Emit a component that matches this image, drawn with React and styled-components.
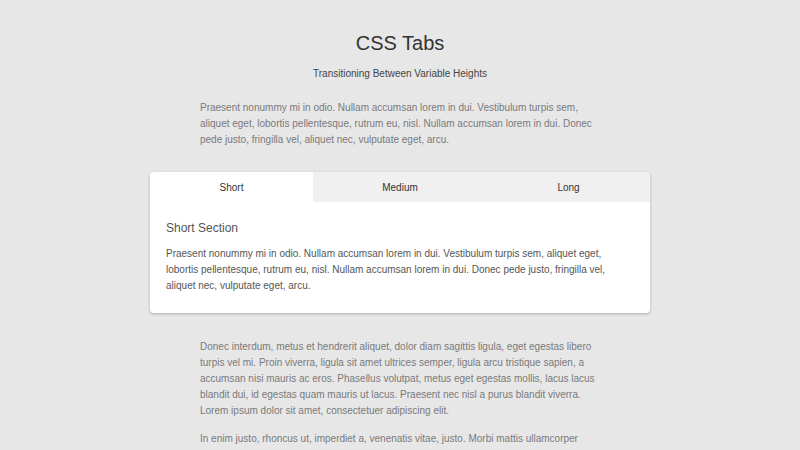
import React, { useState } from 'react'
import styled, { createGlobalStyle } from 'styled-components'

const GlobalStyle = createGlobalStyle`
  body {
    margin: 0;
    background: #e7e7e7;
    font-family: "Liberation Sans", Arial, sans-serif;
  }
`

const Page = styled.div`
  padding-top: 31px;
  display: flex;
  flex-direction: column;
  align-items: center;
`

const Title = styled.h1`
  margin: 0;
  font-size: 20px;
  font-weight: 400;
  color: #333;
  line-height: 24px;
`

const Subtitle = styled.h2`
  margin: 12px 0 0;
  font-size: 10px;
  font-weight: 400;
  color: #444;
  line-height: 14px;
`

const Text = styled.p`
  width: 400px;
  margin: ${({ $top }) => $top || '19px'} 0 0;
  font-size: 10px;
  line-height: 16px;
  color: #7a7a7a;
`

const Card = styled.div`
  width: 500px;
  margin-top: 24px;
  background: #fff;
  border-radius: 4px;
  box-shadow: 0 1px 3px rgba(0, 0, 0, 0.25);
  overflow: hidden;
`

const TabBar = styled.div`
  display: grid;
  grid-template-columns: 163px 1fr 163px;
  background: #f0f0f0;
`

const Tab = styled.button`
  height: 30px;
  border: 0;
  padding: 0;
  font: inherit;
  font-size: 10px;
  color: #333;
  background: ${({ $active }) => ($active ? '#fff' : 'transparent')};
  cursor: pointer;
`

const Panel = styled.div`
  padding: 18px 16px 19px;
`

const PanelTitle = styled.h3`
  margin: 0;
  font-size: 12px;
  font-weight: 400;
  color: #555;
  line-height: 16px;
`

const PanelText = styled.p`
  margin: 10px 0 0;
  font-size: 10px;
  line-height: 16px;
  color: #555;
`

const tabs = ['Short', 'Medium', 'Long']

export default function App() {
  const [active, setActive] = useState(0)

  return (
    <Page>
      <GlobalStyle />
      <Title>CSS Tabs</Title>
      <Subtitle>Transitioning Between Variable Heights</Subtitle>
      <Text>
        Praesent nonummy mi in odio. Nullam accumsan lorem in dui. Vestibulum turpis sem,
        aliquet eget, lobortis pellentesque, rutrum eu, nisl. Nullam accumsan lorem in dui. Donec
        pede justo, fringilla vel, aliquet nec, vulputate eget, arcu.
      </Text>
      <Card>
        <TabBar>
          {tabs.map((t, i) => (
            <Tab key={t} $active={i === active} onClick={() => setActive(i)}>
              {t}
            </Tab>
          ))}
        </TabBar>
        <Panel>
          <PanelTitle>Short Section</PanelTitle>
          <PanelText>
            Praesent nonummy mi in odio. Nullam accumsan lorem in dui. Vestibulum turpis sem, aliquet eget,
            lobortis pellentesque, rutrum eu, nisl. Nullam accumsan lorem in dui. Donec pede justo, fringilla vel,
            aliquet nec, vulputate eget, arcu.
          </PanelText>
        </Panel>
      </Card>
      <Text $top="26px">
        Donec interdum, metus et hendrerit aliquet, dolor diam sagittis ligula, eget egestas libero
        turpis vel mi. Proin viverra, ligula sit amet ultrices semper, ligula arcu tristique sapien, a
        accumsan nisi mauris ac eros. Phasellus volutpat, metus eget egestas mollis, lacus lacus
        blandit dui, id egestas quam mauris ut lacus. Praesent nec nisl a purus blandit viverra.
        Lorem ipsum dolor sit amet, consectetuer adipiscing elit.
      </Text>
      <Text $top="12px">
        In enim justo, rhoncus ut, imperdiet a, venenatis vitae, justo. Morbi mattis ullamcorper
        velit. Phasellus gravida semper nisi. Nullam vel sem. Pellentesque libero tortor, tincidunt
        et, tincidunt eget, semper nec, quam.
      </Text>
    </Page>
  )
}
